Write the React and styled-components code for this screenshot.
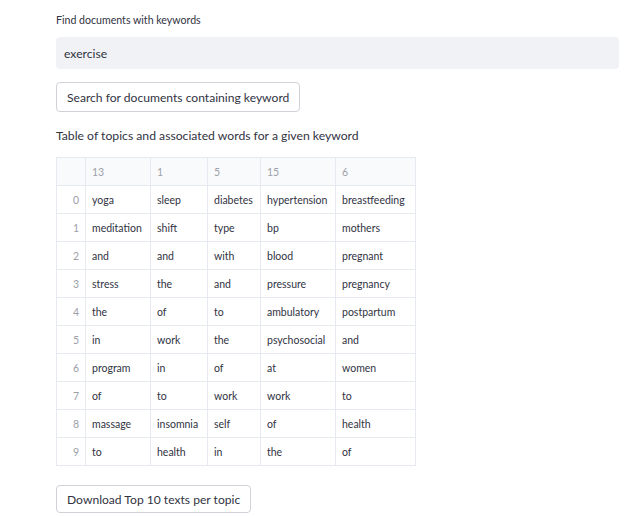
import styled, { createGlobalStyle } from 'styled-components'

const GlobalStyle = createGlobalStyle`
    body {
        margin: 0;
        background: #fff;
        font-family: 'Lato', 'Noto Sans', sans-serif;
        color: #31333f;
    }
`
const Page = styled.main`
    width: 563px;
    padding: 13px 0 0 56px;
    display: flex;
    flex-direction: column;
`
const Label = styled.label`
    font-size: 10.6px;
    line-height: 14px;
    color: #31333f;
    margin-bottom: 10px;
`
const Input = styled.div`
    height: 32px;
    background: #f0f2f6;
    border-radius: 4px;
    padding: 0 8px;
    display: flex;
    align-items: center;
    font-size: 12.2px;
`
const Button = styled.button`
    align-self: flex-start;
    margin-top: ${p => p.$top || '13px'};
    height: ${p => p.$h || '30px'};
    padding: 0 10px;
    background: #fff;
    border: 1px solid #d0d2d8;
    border-radius: 4px;
    font-family: inherit;
    font-size: 12.1px;
    color: #31333f;
`
const Caption = styled.p`
    margin: 16px 0 13px;
    font-size: 12.2px;
    line-height: 16px;
`
const Table = styled.table`
    border-collapse: collapse;
    font-size: 10.5px;
    table-layout: fixed;
    width: 359px;
`
const Th = styled.th`
    box-sizing: border-box;
    height: 28px;
    background: #f9fafc;
    border: 1px solid #e6e9ef;
    color: #9da0a8;
    font-weight: 400;
    text-align: left;
    padding: 0 6px;
    width: ${p => p.$w}px;
`
const Td = styled.td`
    height: 27px;
    border: 1px solid #e6e9ef;
    padding: 0 6px;
    white-space: nowrap;
    overflow: hidden;
    color: #31333f;
`
const IndexTd = styled(Td)`
    color: #9da0a8;
    text-align: right;
    padding: 0 6px 0 0;
`

const cols = ['13', '1', '5', '15', '6']
const widths = [29, 65, 57, 53, 75, 80]
const rows = [
    ['yoga', 'sleep', 'diabetes', 'hypertension', 'breastfeeding'],
    ['meditation', 'shift', 'type', 'bp', 'mothers'],
    ['and', 'and', 'with', 'blood', 'pregnant'],
    ['stress', 'the', 'and', 'pressure', 'pregnancy'],
    ['the', 'of', 'to', 'ambulatory', 'postpartum'],
    ['in', 'work', 'the', 'psychosocial', 'and'],
    ['program', 'in', 'of', 'at', 'women'],
    ['of', 'to', 'work', 'work', 'to'],
    ['massage', 'insomnia', 'self', 'of', 'health'],
    ['to', 'health', 'in', 'the', 'of'],
]

export default function App() {
    return (
        <>
            <GlobalStyle />
            <Page>
                <Label>Find documents with keywords</Label>
                <Input>exercise</Input>
                <Button>Search for documents containing keyword</Button>
                <Caption>Table of topics and associated words for a given keyword</Caption>
                <Table>
                    <thead>
                        <tr>
                            <Th $w={widths[0]}></Th>
                            {cols.map((c, i) => <Th key={c} $w={widths[i + 1]}>{c}</Th>)}
                        </tr>
                    </thead>
                    <tbody>
                        {rows.map((r, i) => (
                            <tr key={i}>
                                <IndexTd>{i}</IndexTd>
                                {r.map((w, j) => <Td key={j}>{w}</Td>)}
                            </tr>
                        ))}
                    </tbody>
                </Table>
                <Button $top="19px" $h="28px">Download Top 10 texts per topic</Button>
            </Page>
        </>
    )
}
